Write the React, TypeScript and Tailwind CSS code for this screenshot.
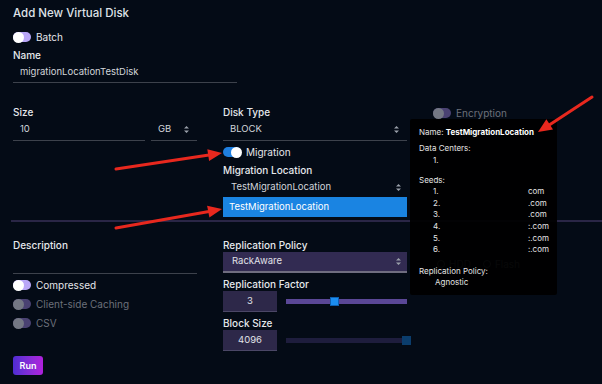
const Chevron = () => (
  <svg width="5" height="7" viewBox="0 0 5 7" className="shrink-0">
    <path d="M2.5 0 L5 2.6 H0 Z M2.5 7 L0 4.4 H5 Z" fill="#9aa0aa" />
  </svg>
);

type ToggleProps = {
  on?: boolean;
  variant: "lavender" | "blue" | "disabled";
  label: string;
};

const Toggle = ({ on, variant, label }: ToggleProps) => {
  const track =
    variant === "blue"
      ? "bg-[#1f7fe0]"
      : variant === "lavender"
        ? "bg-[#b9a6f7]"
        : "bg-[#4a4272]";
  const knob = variant === "disabled" ? "bg-[#747884]" : "bg-white";
  return (
    <div className="flex h-[14px] items-center gap-[5px]">
      <div className={`relative h-[10px] w-[18px] rounded-full ${track}`}>
        <div
          className={`absolute top-[-0.5px] h-[11px] w-[11px] rounded-full ${knob} ${
            on ? "right-[-0.5px]" : "left-[-0.5px]"
          }`}
        />
      </div>
      <span
        className={`text-[10px] leading-[14px] ${
          variant === "disabled" ? "text-[#6c707a]" : "text-[#e4e6ea]"
        }`}
      >
        {label}
      </span>
    </div>
  );
};

const Label = ({ children }: { children: React.ReactNode }) => (
  <div className="h-[14px] text-[10px] font-medium leading-[14px] text-[#e6e8ec]">
    {children}
  </div>
);

const Underlined = ({
  children,
  className = "",
}: {
  children?: React.ReactNode;
  className?: string;
}) => (
  <div
    className={`flex items-center border-b border-[#3d424c] pt-[3px] pb-[4px] pl-[7px] pr-[8px] ${className}`}
  >
    <div className="h-[14px] flex-1 text-[9.5px] leading-[14px] text-[#d2d5da]">
      {children}
    </div>
  </div>
);

const seeds = ["com", ".com", ".com", ":.com", ":.com", ":.com"];

export default function App() {
  return (
    <div className="relative h-[384px] w-[602px] overflow-hidden bg-[#040b16] font-['Inter',sans-serif]">
      <div className="px-[13px] pt-[4px]">
        <div className="h-[18px] text-[11.5px] font-medium leading-[18px] text-[#dfe2e7]">
          Add New Virtual Disk
        </div>
        <div className="mt-[8px]">
          <Toggle variant="lavender" label="Batch" />
        </div>
        <div className="mt-[4px]">
          <Label>Name</Label>
        </div>
        <div className="w-[224px]">
          <div className="border-b border-[#3d424c] pt-[3px] pb-[3px] pl-[7px]">
            <div className="h-[14px] text-[9.5px] leading-[14px] text-[#d2d5da]">
              migrationLocationTestDisk
            </div>
          </div>
        </div>

        <div className="mt-[22px] flex gap-[26px]">
          <div className="w-[184px]">
            <Label>Size</Label>
            <div className="flex gap-[6px]">
              <Underlined className="w-[132px]">10</Underlined>
              <Underlined className="w-[46px]">
                <div className="flex items-center justify-between">
                  GB
                  <Chevron />
                </div>
              </Underlined>
            </div>
          </div>

          <div className="w-[184px]">
            <Label>Disk Type</Label>
            <Underlined>
              <div className="flex items-center justify-between">
                BLOCK
                <Chevron />
              </div>
            </Underlined>
            <div className="mt-[4px]">
              <Toggle on variant="blue" label="Migration" />
            </div>
            <div className="mt-[4px]">
              <Label>Migration Location</Label>
            </div>
            <div className="relative flex items-center pt-[3px] pb-[3px] pl-[8px] pr-[6px]">
              <div className="flex h-[14px] flex-1 items-center justify-between text-[9.5px] leading-[14px] text-[#d2d5da]">
                TestMigrationLocation
                <Chevron />
              </div>
              <div className="absolute top-full left-0 z-10 flex h-[20px] w-[184px] items-center bg-[#1a84e2] pl-[6px] text-[9.5px] text-white">
                TestMigrationLocation
              </div>
            </div>
          </div>

          <div className="mt-[1px]">
            <Toggle variant="disabled" label="Encryption" />
          </div>
        </div>
      </div>

      <div className="mt-[23px] ml-[11px] h-[2px] bg-[#2a2646]" />

      <div className="mt-[16px] flex gap-[26px] px-[13px]">
        <div className="w-[184px]">
          <Label>Description</Label>
          <Underlined />
          <div className="mt-[4px]">
            <Toggle variant="lavender" label="Compressed" />
          </div>
          <div className="mt-[5px]">
            <Toggle variant="disabled" label="Client-side Caching" />
          </div>
          <div className="mt-[5px]">
            <Toggle variant="disabled" label="CSV" />
          </div>
          <button className="mt-[26px] flex h-[19px] w-[30px] items-center justify-center rounded-[3px] bg-gradient-to-r from-[#4f2cd2] to-[#b01fdc] text-[9px] font-semibold text-white">
            Run
          </button>
        </div>

        <div className="w-[184px]">
          <Label>Replication Policy</Label>
          <div className="flex h-[21px] items-center justify-between border-b-2 border-[#6f6d80] bg-[#322b52] pl-[9px] pr-[6px] text-[9.5px] text-[#e0e2e8]">
            RackAware
            <Chevron />
          </div>
          <div className="mt-[4px]">
            <Label>Replication Factor</Label>
          </div>
          <div className="flex items-center gap-[9px]">
            <div className="flex h-[21px] w-[54px] items-center justify-center border-b border-[#4b4766] bg-[#2d2849] text-[9.5px] text-[#e0e2e8]">
              3
            </div>
            <div className="relative h-[5px] flex-1 bg-[#5a4796]">
              <div className="absolute top-[-2px] left-[44px] h-[9px] w-[9px] border border-[#0d5fb0] bg-[#1b8df0]" />
            </div>
          </div>
          <div className="mt-[4px]">
            <Label>Block Size</Label>
          </div>
          <div className="flex items-center gap-[9px]">
            <div className="flex h-[21px] w-[54px] items-center justify-center border-b border-[#4b4766] bg-[#2d2849] text-[9.5px] text-[#e0e2e8]">
              4096
            </div>
            <div className="relative h-[5px] flex-1 bg-[#1e1d3d]">
              <div className="absolute top-[-2px] left-[116px] h-[9px] w-[9px] bg-[#0b3d6c]" />
            </div>
          </div>
        </div>

        <div className="mt-[19px] flex h-[14px] items-center gap-[4px] pl-[4px] text-[10px] text-[#7a7e88]">
          <span className="h-[8px] w-[8px] rounded-full border border-[#7a7e88]" />
          <span>HDD</span>
          <span className="ml-[8px] h-[8px] w-[8px] rounded-full border border-[#7a7e88]" />
          <span>Flash</span>
        </div>
      </div>

      <div className="absolute top-[119px] left-[410px] z-20 h-[176px] w-[147px] rounded-[2px] bg-black/[0.94] pt-[7px] pl-[9px] text-[8px] text-[#e4e4e4]">
        <div className="h-[12px] leading-[12px]">
          Name: <span className="font-bold text-white">TestMigrationLocation</span>
        </div>
        <div className="mt-[4px] h-[12px] leading-[12px]">Data Centers:</div>
        <div className="h-[12px] pl-[14px] leading-[12px]">1.</div>
        <div className="mt-[8px] h-[12px] leading-[12px]">Seeds:</div>
        {seeds.map((s, i) => (
          <div key={i} className="flex h-[11.7px] pl-[14px] leading-[11.7px]">
            <span className="w-[95px]">{i + 1}.</span>
            <span>{s}</span>
          </div>
        ))}
        <div className="mt-[10px] h-[11px] leading-[11px]">Replication Policy:</div>
        <div className="h-[11px] pl-[16px] leading-[11px]">Agnostic</div>
      </div>

      <svg
        className="pointer-events-none absolute inset-0 z-30"
        width="602"
        height="384"
        viewBox="0 0 602 384"
      >
        <g stroke="#e8281e" strokeWidth="3" strokeLinecap="round">
          <line x1="116" y1="169" x2="209" y2="155" />
          <line x1="116" y1="228" x2="209" y2="211.5" />
          <line x1="592" y1="97" x2="550" y2="124.5" />
        </g>
        <g fill="#e8281e">
          <polygon points="222,153 209.1,161 207.3,149.2" />
          <polygon points="222,209 209.4,217.5 207.1,205.7" />
          <polygon points="538,132 553,129.4 546.4,119.3" />
        </g>
      </svg>
    </div>
  );
}
